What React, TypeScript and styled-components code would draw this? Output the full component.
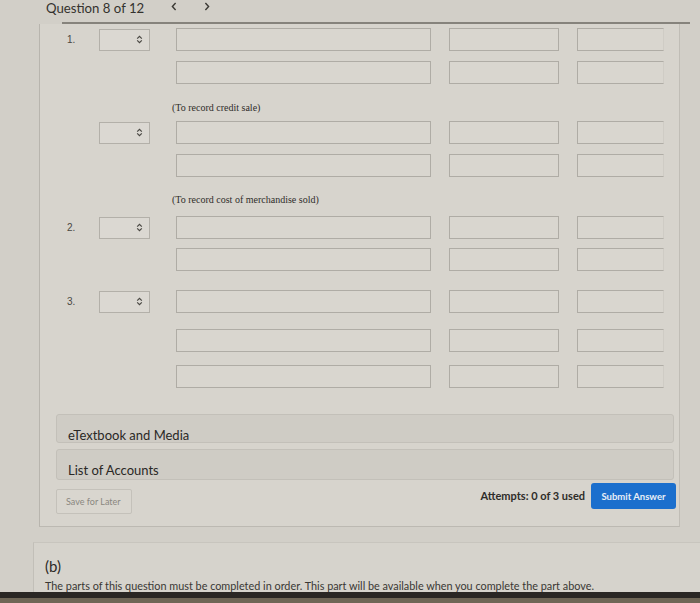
import styled, { createGlobalStyle } from 'styled-components';

const GlobalStyle = createGlobalStyle`
  html, body {
    margin: 0;
    padding: 0;
    background: #cfccc5;
  }
`;

type Line =
  | { kind: 'row'; num?: string; select?: boolean; gap: number }
  | { kind: 'note'; text: string; gap: number };

const LINES: Line[] = [
  { kind: 'row', num: '1.', select: true, gap: 0 },
  { kind: 'row', gap: 10 },
  { kind: 'note', text: '(To record credit sale)', gap: 17 },
  { kind: 'row', select: true, gap: 6 },
  { kind: 'row', gap: 10 },
  { kind: 'note', text: '(To record cost of merchandise sold)', gap: 16 },
  { kind: 'row', num: '2.', select: true, gap: 9 },
  { kind: 'row', gap: 9 },
  { kind: 'row', num: '3.', select: true, gap: 19 },
  { kind: 'row', gap: 16 },
  { kind: 'row', gap: 13 },
];

function UpDown() {
  return (
    <svg width="7" height="9" viewBox="0 0 7 9">
      <path d="M1.2 3.6 L3.5 1.3 L5.8 3.6" fill="none" stroke="#4a4843" strokeWidth="1.2" />
      <path d="M1.2 5.4 L3.5 7.7 L5.8 5.4" fill="none" stroke="#4a4843" strokeWidth="1.2" />
    </svg>
  );
}

function Chevron({ dir }: { dir: 'left' | 'right' }) {
  return (
    <svg width="6" height="9" viewBox="0 0 6 9">
      <path
        d={dir === 'left' ? 'M4.6 1 L1.4 4.5 L4.6 8' : 'M1.4 1 L4.6 4.5 L1.4 8'}
        fill="none"
        stroke="#3b3934"
        strokeWidth="1.4"
      />
    </svg>
  );
}

function EntryLines() {
  return (
    <Entries>
      {LINES.map((line, i) =>
        line.kind === 'note' ? (
          <Note key={i} $gap={line.gap}>
            {line.text}
          </Note>
        ) : (
          <Row key={i} $gap={line.gap}>
            <Num>{line.num}</Num>
            {line.select ? (
              <SelectBox>
                <UpDown />
              </SelectBox>
            ) : (
              <SelectSpace />
            )}
            <Field $w={255} />
            <Field $w={110} />
            <Field $w={87} $last />
          </Row>
        )
      )}
    </Entries>
  );
}

export default function App() {
  return (
    <>
      <GlobalStyle />
      <Page>
        <Header>
          <Title>Question 8 of 12</Title>
          <NavArrow>
            <Chevron dir="left" />
          </NavArrow>
          <NavArrow>
            <Chevron dir="right" />
          </NavArrow>
        </Header>
        <HeaderRule />
        <Panel>
          <EntryLines />
          <Accordion $h={29} $gap={26}>eTextbook and Media</Accordion>
          <Accordion $h={31} $gap={6}>List of Accounts</Accordion>
          <Actions>
            <SaveButton>Save for Later</SaveButton>
            <Attempts>Attempts: 0 of 3 used</Attempts>
            <SubmitButton>Submit Answer</SubmitButton>
          </Actions>
        </Panel>
        <PartB>
          <PartLabel>(b)</PartLabel>
          <PartText>
            The parts of this question must be completed in order. This part will be available when you
            complete the part above.
          </PartText>
        </PartB>
        <Bezel />
      </Page>
    </>
  );
}

const Page = styled.div`
  width: 700px;
  height: 603px;
  overflow: hidden;
  display: flex;
  flex-direction: column;
  background: #d2cfc8;
  font-family: Lato, 'Liberation Sans', sans-serif;
  color: #2d2b28;
`;

const Header = styled.header`
  height: 22px;
  display: flex;
  align-items: flex-start;
  padding-left: 46px;
  box-sizing: border-box;
`;

const Title = styled.span`
  font-size: 13.2px;
  line-height: 16px;
  color: #34322e;
  margin-right: 27px;
`;

const NavArrow = styled.span`
  display: flex;
  align-items: center;
  height: 12px;
  margin-right: 27px;
`;

const HeaderRule = styled.div`
  height: 2px;
  margin: 0 10px 0 62px;
  background: #86837c;
`;

const Panel = styled.section`
  margin: 0 20px 0 39px;
  padding: 4px 0 17px 0;
  background: #d7d4cd;
  border-left: 1px solid #b8b5ae;
  border-right: 1px solid #c0bdb6;
  border-bottom: 1px solid #bcb9b2;
  display: flex;
  flex-direction: column;
`;

const Entries = styled.div`
  display: flex;
  flex-direction: column;
  padding-left: 27px;
`;

const Row = styled.div<{ $gap: number }>`
  display: flex;
  align-items: center;
  height: 23px;
  margin-top: ${(p) => p.$gap}px;
`;

const Num = styled.span`
  width: 32px;
  font-family: 'Liberation Sans', Arial, sans-serif;
  font-size: 10px;
  color: #4a4843;
`;

const SelectBox = styled.div`
  width: 51px;
  height: 22px;
  box-sizing: border-box;
  margin-right: 26px;
  border: 1px solid #b3b0a9;
  background: #dbd8d2;
  display: flex;
  align-items: center;
  justify-content: flex-end;
  padding-right: 6px;
`;

const SelectSpace = styled.div`
  width: 51px;
  margin-right: 26px;
`;

const Field = styled.div<{ $w: number; $last?: boolean }>`
  width: ${(p) => p.$w}px;
  height: 23px;
  box-sizing: border-box;
  margin-right: ${(p) => (p.$last ? 0 : 18)}px;
  border: 1px solid #afaca5;
  border-right-color: ${(p) => (p.$last ? '#cfccc5' : '#afaca5')};
  background: #d9d6cf;
`;

const Note = styled.div<{ $gap: number }>`
  height: 14px;
  margin-top: ${(p) => p.$gap}px;
  padding-left: 105px;
  font-family: 'Liberation Serif', 'Times New Roman', serif;
  font-size: 10px;
  line-height: 14px;
  color: #2f2d2a;
`;

const Accordion = styled.div<{ $h: number; $gap: number }>`
  height: ${(p) => p.$h}px;
  margin: ${(p) => p.$gap}px 5px 0 16px;
  box-sizing: border-box;
  padding: 12px 0 0 11px;
  background: #cfccc5;
  border: 1px solid #c3c0b9;
  border-radius: 3px;
  font-size: 13px;
  line-height: 16px;
  color: #2a2825;
`;

const Actions = styled.div`
  display: flex;
  align-items: flex-start;
  margin: 3px 3px 0 16px;
  height: 26px;
`;

const SaveButton = styled.button`
  margin-top: 6px;
  width: 76px;
  height: 25px;
  padding: 0 0 0 9px;
  text-align: left;
  font-family: Lato, 'Liberation Sans', sans-serif;
  font-size: 9px;
  color: #8a8780;
  background: #d9d6cf;
  border: 1px solid #c4c1ba;
  border-radius: 2px;
`;

const Attempts = styled.span`
  margin-left: auto;
  margin-right: 6px;
  line-height: 26px;
  font-size: 11px;
  font-weight: 700;
  color: #2e2c29;
`;

const SubmitButton = styled.button`
  width: 85px;
  height: 26px;
  padding: 0;
  font-family: Lato, 'Liberation Sans', sans-serif;
  font-size: 9.5px;
  font-weight: 700;
  color: #e8eef6;
  background: #1b6fcd;
  border: none;
  border-radius: 3px;
`;

const PartB = styled.section`
  margin: 15px 0 0 33px;
  height: 50px;
  box-sizing: border-box;
  padding: 14px 0 0 11px;
  background: #d6d3cc;
  border-left: 1px solid #c2bfb8;
  border-top: 1px solid #c8c5be;
`;

const PartLabel = styled.div`
  font-size: 15px;
  line-height: 18px;
  color: #2c2a27;
`;

const PartText = styled.div`
  margin-top: 4px;
  font-size: 10.85px;
  line-height: 13px;
  white-space: nowrap;
  color: #3a3834;
`;

const Bezel = styled.div`
  height: 11px;
  background: linear-gradient(#2a2724 0 55%, #6f6656 55% 100%);
`;
